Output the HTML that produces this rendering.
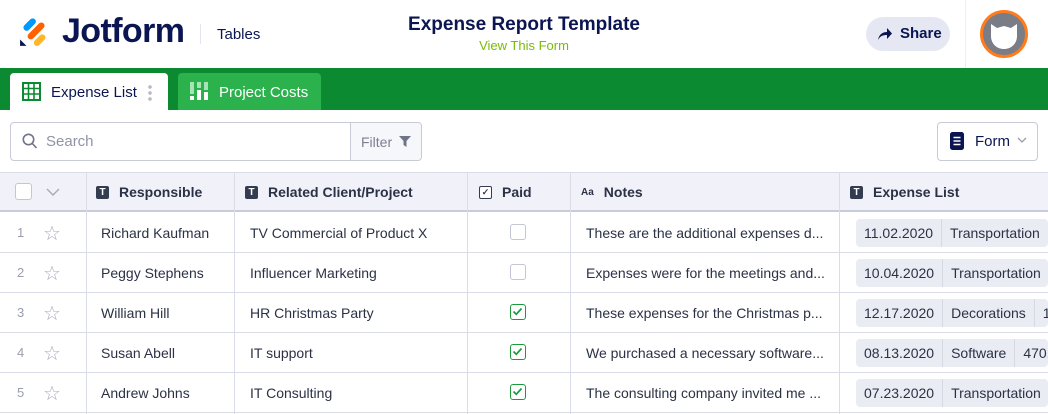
<!DOCTYPE html>
<html><head><style>
*{box-sizing:border-box;margin:0;padding:0}
body{width:1048px;height:414px;overflow:hidden;font-family:"Liberation Sans",sans-serif;background:#fff;position:relative;color:#0a1551}
.a{position:absolute}
.hdr{top:0;left:0;width:1048px;height:68px;background:#fff}
.green{top:68px;left:0;width:1048px;height:42px;background:#0b8a31}
.tool{top:110px;left:0;width:1048px;height:62px;background:#fff}
.th{top:172px;left:0;width:1048px;height:40px;background:#f1f2f9;border-top:1px solid #dadce8;border-bottom:2px solid #c8cbd8}
.row{left:0;width:1048px;height:40px;border-bottom:1px solid #dadce8;background:#fff}
.vl{top:172px;width:1px;height:242px;background:#dadce8}
.t{font-size:14px;color:#2b3245}
.hd{font-size:14px;font-weight:bold;color:#2b3245;display:flex;align-items:center;gap:10px;height:18px}
.ti{display:inline-block;width:13px;height:13px;background:#343c4f;border-radius:2px;color:#fff;font-size:10px;font-weight:bold;text-align:center;line-height:13px}
.cb{width:16px;height:16px;border:1px solid #c3c6d4;border-radius:3px;background:#fff}
.cbc{width:16px;height:16px;border:1.5px solid #1f9b3b;border-radius:3px;background:#fff}
.pill{height:28px;background:#eaecf4;border-radius:4px;font-size:14px;color:#2b3245;line-height:28px;white-space:nowrap;overflow:hidden}
.pill span{display:inline-block;padding:0 8px;border-right:1px solid #d6d9e4}
</style></head><body>
<div class="a hdr"></div>
<svg class="a" style="left:19px;top:16px" width="32" height="32" viewBox="0 0 30 30">
<rect x="3" y="5" width="14" height="6" rx="3" fill="#0099ff" transform="rotate(-45 10 8)"/>
<rect x="6" y="11" width="20" height="6" rx="3" fill="#ff6100" transform="rotate(-45 16 14)"/>
<rect x="13" y="20" width="13" height="6" rx="3" fill="#ffb629" transform="rotate(-45 19 23)"/>
<path d="M1 22 L1 28 L7 28 Z" fill="#0a1551"/>
</svg>
<div class="a" style="left:62px;top:12px;font-size:34px;font-weight:bold;color:#0a1551;letter-spacing:-0.6px">Jotform</div>
<div class="a" style="left:200px;top:24px;width:1px;height:20px;background:#e3e5ee"></div>
<div class="a" style="left:217px;top:26px;font-size:15px;color:#0a1551">Tables</div>
<div class="a" style="left:0;top:14px;width:1048px;text-align:center;font-size:19px;font-weight:bold;color:#0a1551">Expense Report Template</div>
<div class="a" style="left:0;top:38px;width:1048px;text-align:center;font-size:13px;color:#78bb07">View This Form</div>
<div class="a" style="left:866px;top:17px;width:84px;height:34px;border-radius:17px;background:#e5e7f3;font-size:15px;font-weight:bold;color:#0a1551;line-height:34px;padding-left:34px">Share</div>
<svg class="a" style="left:877px;top:27px" width="16" height="14" viewBox="0 0 16 14"><path d="M1 13 C2 7 6 5 10 5 V1 L15 6.5 L10 12 V8 C6 8 3 9 1 13Z" fill="#0a1551"/></svg>
<div class="a" style="left:965px;top:0;width:1px;height:68px;background:#eceef4"></div>
<div class="a" style="left:980px;top:10px;width:48px;height:48px;border-radius:50%;background:#7a7d86;border:3px solid #ff7b1c"></div>
<svg class="a" style="left:989px;top:22px" width="30" height="28" viewBox="0 0 30 28"><path d="M2 2 L8 6 L15 4 L22 6 L28 2 L28 14 C28 22 22 27 15 27 C8 27 2 22 2 14Z" fill="#fff"/></svg>

<div class="a green"></div>
<div class="a" style="left:10px;top:73px;width:158px;height:37px;background:#fff;border-radius:4px 4px 0 0"></div>
<svg class="a" style="left:22px;top:82px" width="19" height="19" viewBox="0 0 19 19"><rect x="1" y="1" width="17" height="17" fill="none" stroke="#0b8a31" stroke-width="2"/><path d="M1 6.5H18M1 12H18M6.5 1V18M12 1V18" stroke="#0b8a31" stroke-width="1.6"/></svg>
<div class="a" style="left:51px;top:84px;font-size:15px;color:#0a1551">Expense List</div>
<div class="a" style="left:148px;top:84px;width:4px;height:18px;background:radial-gradient(circle,#b7bac6 1.6px,transparent 2px) 0 0/4px 6px"></div>
<div class="a" style="left:178px;top:73px;width:143px;height:37px;background:#2cb24c;border-radius:4px 4px 0 0"></div>
<svg class="a" style="left:189px;top:81px" width="20" height="20" viewBox="0 0 20 20"><rect x="1" y="1" width="4" height="12" fill="#a7e3b5"/><rect x="1" y="15" width="4" height="4" fill="#fff"/><rect x="8" y="1" width="4" height="6" fill="#a7e3b5"/><rect x="8" y="9" width="4" height="10" fill="#fff"/><rect x="15" y="1" width="4" height="8" fill="#a7e3b5"/><rect x="15" y="11" width="4" height="8" fill="#fff"/></svg>
<div class="a" style="left:219px;top:84px;font-size:15px;color:#fff">Project Costs</div>

<div class="a tool"></div>
<div class="a" style="left:10px;top:122px;width:412px;height:39px;border:1px solid #c8cbd6;border-radius:4px;background:#fff"></div>
<div class="a" style="left:350px;top:123px;width:71px;height:37px;background:#f6f7fb;border-left:1px solid #c8cbd6;border-radius:0 4px 4px 0"></div>
<svg class="a" style="left:22px;top:133px" width="16" height="17" viewBox="0 0 16 17"><circle cx="6.5" cy="6.5" r="5.2" fill="none" stroke="#6f7486" stroke-width="1.6"/><path d="M10.3 10.5 L14.5 15" stroke="#6f7486" stroke-width="1.6"/></svg>
<div class="a" style="left:46px;top:133px;font-size:15px;color:#8f94a6">Search</div>
<div class="a" style="left:361px;top:134px;font-size:14px;color:#7a7f90">Filter</div>
<svg class="a" style="left:399px;top:136px" width="12" height="11" viewBox="0 0 12 11"><path d="M0 0H12L7.5 5V11L4.5 9V5Z" fill="#6f7486"/></svg>
<div class="a" style="left:937px;top:122px;width:101px;height:39px;border:1px solid #c8cbd6;border-radius:4px;background:#fff"></div>
<svg class="a" style="left:950px;top:132px" width="14" height="18" viewBox="0 0 14 18"><rect width="14" height="18" rx="2.5" fill="#0a1551"/><path d="M3.5 5.5H10.5M3.5 9H10.5M3.5 12.5H10.5" stroke="#fff" stroke-width="1.6"/></svg>
<div class="a" style="left:975px;top:133px;font-size:15px;color:#0a1551">Form</div>
<svg class="a" style="left:1017px;top:137px" width="10" height="6" viewBox="0 0 10 6"><path d="M1 1L5 5L9 1" fill="none" stroke="#9a9eae" stroke-width="1.3"/></svg>

<div class="a th"></div>
<div class="a cb" style="left:15px;top:183px;width:17px;height:17px"></div>
<svg class="a" style="left:46px;top:188px" width="14" height="8" viewBox="0 0 14 8"><path d="M1 1L7 7L13 1" fill="none" stroke="#a5a9b8" stroke-width="1.4"/></svg>
<div class="a hd" style="left:96px;top:183px"><span class="ti">T</span>Responsible</div>
<div class="a hd" style="left:245px;top:183px"><span class="ti">T</span>Related Client/Project</div>
<div class="a hd" style="left:479px;top:183px"><span class="ti" style="background:#fff;border:1px solid #343c4f;color:#343c4f;font-size:9px;line-height:11px">✓</span>Paid</div>
<div class="a hd" style="left:581px;top:183px"><span style="font-size:10px">Aa</span>Notes</div>
<div class="a hd" style="left:850px;top:183px"><span class="ti">T</span>Expense List</div>

<div class="a row" style="top:213px"></div>
<div class="a row" style="top:253px"></div>
<div class="a row" style="top:293px"></div>
<div class="a row" style="top:333px"></div>
<div class="a row" style="top:373px"></div>

<div class="a vl" style="left:86px"></div>
<div class="a vl" style="left:234px"></div>
<div class="a vl" style="left:467px"></div>
<div class="a vl" style="left:570px"></div>
<div class="a vl" style="left:839px"></div>

<div class="a" style="left:0;top:213px;width:1048px">
<div style="position:relative;height:40px"><div class="a t" style="left:17px;top:12px;color:#9a9eae;font-size:13px">1</div><div class="a" style="left:43px;top:8px;font-size:20px;color:#a8acba">☆</div><div class="a t" style="left:101px;top:12px">Richard Kaufman</div><div class="a t" style="left:250px;top:12px">TV Commercial of Product X</div><div class="a cb" style="left:510px;top:11px"></div><div class="a t" style="left:586px;top:12px">These are the additional expenses d...</div><div class="a pill" style="left:856px;top:6px;width:192px"><span>11.02.2020</span><span>Transportation</span></div></div>
<div style="position:relative;height:40px"><div class="a t" style="left:17px;top:12px;color:#9a9eae;font-size:13px">2</div><div class="a" style="left:43px;top:8px;font-size:20px;color:#a8acba">☆</div><div class="a t" style="left:101px;top:12px">Peggy Stephens</div><div class="a t" style="left:250px;top:12px">Influencer Marketing</div><div class="a cb" style="left:510px;top:11px"></div><div class="a t" style="left:586px;top:12px">Expenses were for the meetings and...</div><div class="a pill" style="left:856px;top:6px;width:192px"><span>10.04.2020</span><span>Transportation</span></div></div>
<div style="position:relative;height:40px"><div class="a t" style="left:17px;top:12px;color:#9a9eae;font-size:13px">3</div><div class="a" style="left:43px;top:8px;font-size:20px;color:#a8acba">☆</div><div class="a t" style="left:101px;top:12px">William Hill</div><div class="a t" style="left:250px;top:12px">HR Christmas Party</div><div class="a cbc" style="left:510px;top:11px"><svg width="13" height="13" viewBox="0 0 13 13" style="display:block"><path d="M2.5 6.5L5.3 9.3L10.5 3.5" fill="none" stroke="#1f9b3b" stroke-width="1.7"/></svg></div><div class="a t" style="left:586px;top:12px">These expenses for the Christmas p...</div><div class="a pill" style="left:856px;top:6px;width:192px"><span>12.17.2020</span><span>Decorations</span><span>13</span></div></div>
<div style="position:relative;height:40px"><div class="a t" style="left:17px;top:12px;color:#9a9eae;font-size:13px">4</div><div class="a" style="left:43px;top:8px;font-size:20px;color:#a8acba">☆</div><div class="a t" style="left:101px;top:12px">Susan Abell</div><div class="a t" style="left:250px;top:12px">IT support</div><div class="a cbc" style="left:510px;top:11px"><svg width="13" height="13" viewBox="0 0 13 13" style="display:block"><path d="M2.5 6.5L5.3 9.3L10.5 3.5" fill="none" stroke="#1f9b3b" stroke-width="1.7"/></svg></div><div class="a t" style="left:586px;top:12px">We purchased a necessary software...</div><div class="a pill" style="left:856px;top:6px;width:192px"><span>08.13.2020</span><span>Software</span><span>470.</span></div></div>
<div style="position:relative;height:40px"><div class="a t" style="left:17px;top:12px;color:#9a9eae;font-size:13px">5</div><div class="a" style="left:43px;top:8px;font-size:20px;color:#a8acba">☆</div><div class="a t" style="left:101px;top:12px">Andrew Johns</div><div class="a t" style="left:250px;top:12px">IT Consulting</div><div class="a cbc" style="left:510px;top:11px"><svg width="13" height="13" viewBox="0 0 13 13" style="display:block"><path d="M2.5 6.5L5.3 9.3L10.5 3.5" fill="none" stroke="#1f9b3b" stroke-width="1.7"/></svg></div><div class="a t" style="left:586px;top:12px">The consulting company invited me ...</div><div class="a pill" style="left:856px;top:6px;width:192px"><span>07.23.2020</span><span>Transportation</span></div></div>
</div>
</body></html>
